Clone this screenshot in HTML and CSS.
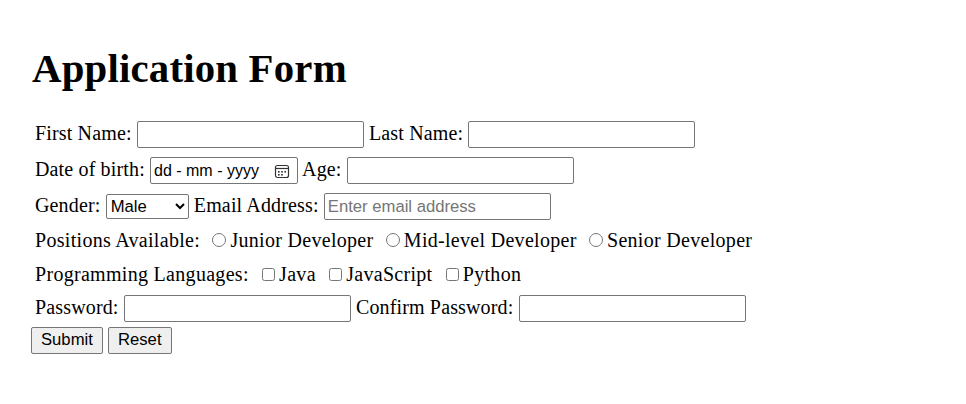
FILE: index.html
```html
<!DOCTYPE html>
<html lang="en">
<head>
    <meta charset="UTF-8">
    <meta name="viewport" content="width=device-width, initial-scale=1.0">
    <title>Application Form</title>
    <link rel="stylesheet" href="styles.css">
</head>
<body>
    <div class="page">
        <h1>Application Form</h1>
        <form id="appForm">
            <div class="row">
                <label for="first">First Name:</label>
                <input type="text" id="first" name="first">
                <label for="last">Last Name:</label>
                <input type="text" id="last" name="last">
            </div>
            <div class="row">
                <label for="dob">Date of birth:</label>
                <span class="date-box">
                    <input type="text" id="dob" name="dob" placeholder="dd - mm - yyyy">
                    <svg width="16" height="16" viewBox="0 0 16 16" aria-hidden="true">
                        <rect x="1.5" y="2.5" width="13" height="12" rx="2" fill="none" stroke="#333" stroke-width="1.2"/>
                        <line x1="1.5" y1="5.5" x2="14.5" y2="5.5" stroke="#333" stroke-width="1.2"/>
                        <rect x="4" y="8" width="1.6" height="1.6" fill="#333"/>
                        <rect x="7.2" y="8" width="1.6" height="1.6" fill="#333"/>
                        <rect x="10.4" y="8" width="1.6" height="1.6" fill="#333"/>
                        <rect x="4" y="11" width="1.6" height="1.6" fill="#333"/>
                        <rect x="7.2" y="11" width="1.6" height="1.6" fill="#333"/>
                    </svg>
                </span>
                <label for="age">Age:</label>
                <input type="text" id="age" name="age">
            </div>
            <div class="row">
                <label for="gender">Gender:</label>
                <select id="gender" name="gender">
                    <option>Male</option>
                    <option>Female</option>
                    <option>Other</option>
                </select>
                <label for="email">Email Address:</label>
                <input type="email" id="email" name="email" placeholder="Enter email address">
            </div>
            <div class="row choices positions">
                <span class="group-label">Positions Available:</span>
                <input type="radio" id="junior" name="position"><label for="junior">Junior Developer</label>
                <input type="radio" id="mid" name="position"><label for="mid">Mid-level Developer</label>
                <input type="radio" id="senior" name="position"><label for="senior">Senior Developer</label>
            </div>
            <div class="row choices languages">
                <span class="group-label">Programming Languages:</span>
                <input type="checkbox" id="java" name="lang"><label for="java">Java</label>
                <input type="checkbox" id="js" name="lang"><label for="js">JavaScript</label>
                <input type="checkbox" id="py" name="lang"><label for="py">Python</label>
            </div>
            <div class="row passwords">
                <label for="pass">Password:</label>
                <input type="password" id="pass" name="pass">
                <label for="confirm">Confirm Password:</label>
                <input type="password" id="confirm" name="confirm">
            </div>
            <div class="buttons">
                <input type="submit" value="Submit">
                <input type="reset" value="Reset">
            </div>
        </form>
    </div>
</body>
</html>
```
FILE: styles.css
```css
body {
    margin: 0;
    font-family: "Liberation Serif", "Times New Roman", serif;
    font-size: 20px;
    letter-spacing: 0.15px;
    color: #000;
    background-color: #fff;
}
.page {
    padding: 20px 31px;
}
h1 {
    font-size: 40.8px;
    font-weight: bold;
    margin: 25px 0 22.5px 1px;
    letter-spacing: 0.2px;
}
.row {
    margin-left: 4px;
    line-height: 36px;
}
.row.choices {
    letter-spacing: 0.3px;
}
.row.positions {
    line-height: 35px;
}
.row.languages {
    line-height: 33px;
}
.row.passwords {
    line-height: 32px;
}
input[type=text], input[type=email], input[type=password] {
    font-family: "Liberation Sans", Arial, sans-serif;
    font-size: 16.67px;
    letter-spacing: 0;
    width: 227px;
    height: 27px;
    box-sizing: border-box;
    padding: 1px 3px;
    border: 1px solid #767676;
    border-radius: 2px;
}
input::placeholder {
    color: #757575;
}
.date-box {
    display: inline-flex;
    align-items: center;
    width: 148px;
    height: 27px;
    box-sizing: border-box;
    border: 1px solid #767676;
    border-radius: 2px;
    padding: 0 4px 0 3px;
}
.date-box input[type=text] {
    border: none;
    width: 120px;
    height: 23px;
    padding: 0;
    font-size: 16px;
    outline: none;
}
.date-box input::placeholder {
    color: #000;
}
select {
    font-family: "Liberation Sans", Arial, sans-serif;
    font-size: 16.67px;
    letter-spacing: 0;
    width: 83px;
    height: 25px;
    border: 1px solid #767676;
    border-radius: 2px;
    background-color: #fff;
}
input[type=radio] {
    width: 14px;
    height: 14px;
    margin: 0 4px 0 7px;
}
input[type=checkbox] {
    width: 13px;
    height: 13px;
    margin: 0 4px 0 8px;
}
.buttons {
    margin-top: 4px;
}
input[type=submit], input[type=reset] {
    font-family: "Liberation Sans", Arial, sans-serif;
    font-size: 16.67px;
    letter-spacing: 0;
    height: 27px;
    padding: 1px 9px;
    background-color: #efefef;
    border: 1px solid #767676;
    border-radius: 2px;
    color: #000;
}
```
